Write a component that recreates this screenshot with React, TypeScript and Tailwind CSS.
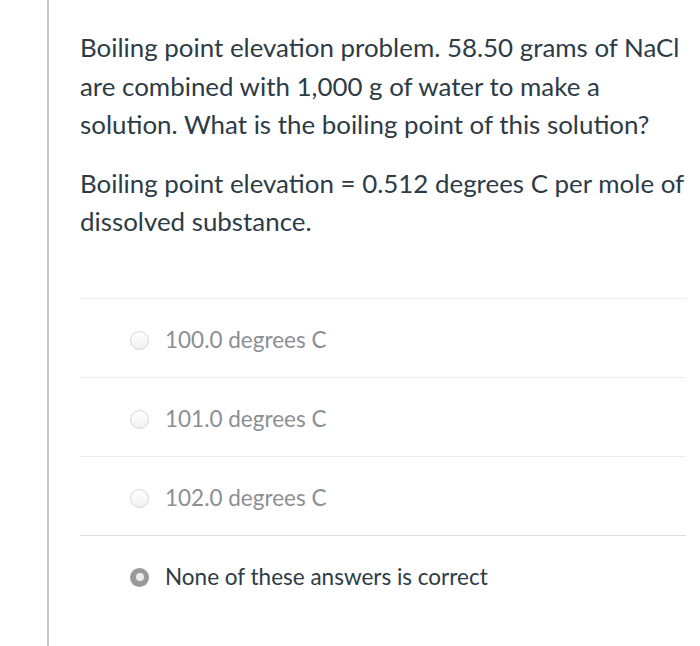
const OPTIONS = [
    { label: '100.0 degrees C', selected: false },
    { label: '101.0 degrees C', selected: false },
    { label: '102.0 degrees C', selected: false },
    { label: 'None of these answers is correct', selected: true },
];

function Radio({ selected }: { selected: boolean }) {
    if (selected) {
        return (
            <span className="flex h-[19px] w-[19px] shrink-0 items-center justify-center rounded-full bg-[#9a9a9a]">
                <span className="h-[8px] w-[8px] rounded-full bg-[#ededed]" />
            </span>
        );
    }
    return <span className="h-[19px] w-[19px] shrink-0 rounded-full border border-[#d6d6d6] bg-gradient-to-b from-white to-[#f1f1f1]" />;
}

export default function App() {
    return (
        <div className="flex h-[646px] w-[700px] overflow-hidden bg-white font-['Lato',sans-serif] text-[#2d3b45]">
            <div className="w-[47px] shrink-0" />
            <div className="w-[2px] shrink-0 bg-[#c4c8cb]" />
            <div className="flex-1 pl-[31px] pr-[14px] pt-[28px]">
                <p className="whitespace-nowrap text-[25.9px] leading-[38.5px]">
                    Boiling point elevation problem. 58.50 grams of NaCl
                    <br />
                    are combined with 1,000 g of water to make a
                    <br />
                    solution. What is the boiling point of this solution?
                </p>
                <p className="mt-[20px] whitespace-nowrap text-[25.9px] leading-[38.5px]">
                    Boiling point elevation = 0.512 degrees C per mole of
                    <br />
                    dissolved substance.
                </p>

                <div className="mt-[57px]">
                    {OPTIONS.map((opt, i) => (
                        <div
                            key={opt.label}
                            className={`flex h-[79px] items-center gap-[16px] border-t pl-[50px] pt-[5px] ${i === 3 ? 'border-[#dcdcdc]' : 'border-[#ececec]'}`}
                        >
                            <Radio selected={opt.selected} />
                            <span className={`text-[22.5px] ${opt.selected ? 'text-[#2d3b45]' : 'text-[#8b8f93]'}`}>{opt.label}</span>
                        </div>
                    ))}
                </div>
            </div>
        </div>
    );
}
